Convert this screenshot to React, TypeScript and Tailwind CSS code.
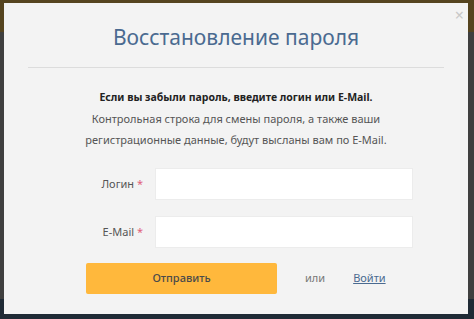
import React from "react";

const font = { fontFamily: "'Noto Sans', 'Open Sans', sans-serif" };

function Field({ label }: { label: string }) {
  return (
    <div className="flex items-center">
      <label className="w-[115px] text-right text-[11px] text-[#555]">
        {label} <span className="text-[#e0607a]">*</span>
      </label>
      <input className="ml-[12px] h-[32px] w-[258px] bg-white border border-[#ececec] outline-none" />
    </div>
  );
}

export default function App() {
  return (
    <div className="relative w-[474px] h-[319px] overflow-hidden" style={font}>
      <div className="flex flex-col h-full">
        <div className="h-[32px] bg-[#55441f]" />
        <div className="flex-1 bg-[#3f3f3f]" />
        <div className="h-[20px] bg-[#1f2a35]" />
      </div>

      <div className="absolute left-[4px] top-[3px] w-[464px] h-[311px] bg-[#f3f3f3] px-[24px] pt-[18px]">
        <button className="absolute right-[4px] top-[4px] text-[16px] leading-none text-[#c8c8c8]">×</button>
        <h1 className="text-center text-[21px] leading-[32px] text-[#4a6a90]">
          Восстановление пароля
        </h1>
        <div className="mt-[14px] h-px bg-[#dcdcdc]" />

        <div className="mt-[19px] text-center text-[11px] leading-[21px]">
          <p className="font-bold text-[#222] text-[10.5px]">Если вы забыли пароль, введите логин или E-Mail.</p>
          <p className="text-[#555]">Контрольная строка для смены пароля, а также ваши</p>
          <p className="text-[#555]">регистрационные данные, будут высланы вам по E-Mail.</p>
        </div>

        <div className="mt-[18px] flex flex-col gap-[16px]">
          <Field label="Логин" />
          <Field label="E-Mail" />
        </div>

        <div className="mt-[15px] flex items-center">
          <button className="ml-[58px] h-[31px] w-[191px] rounded-[2px] bg-[#ffb83c] text-[11px] text-[#4a4a4a] font-medium">
            Отправить
          </button>
          <span className="ml-[28px] text-[11px] text-[#777]">или</span>
          <a href="#" className="ml-[28px] text-[11px] text-[#4a6a90] underline">Войти</a>
        </div>
      </div>
    </div>
  );
}
